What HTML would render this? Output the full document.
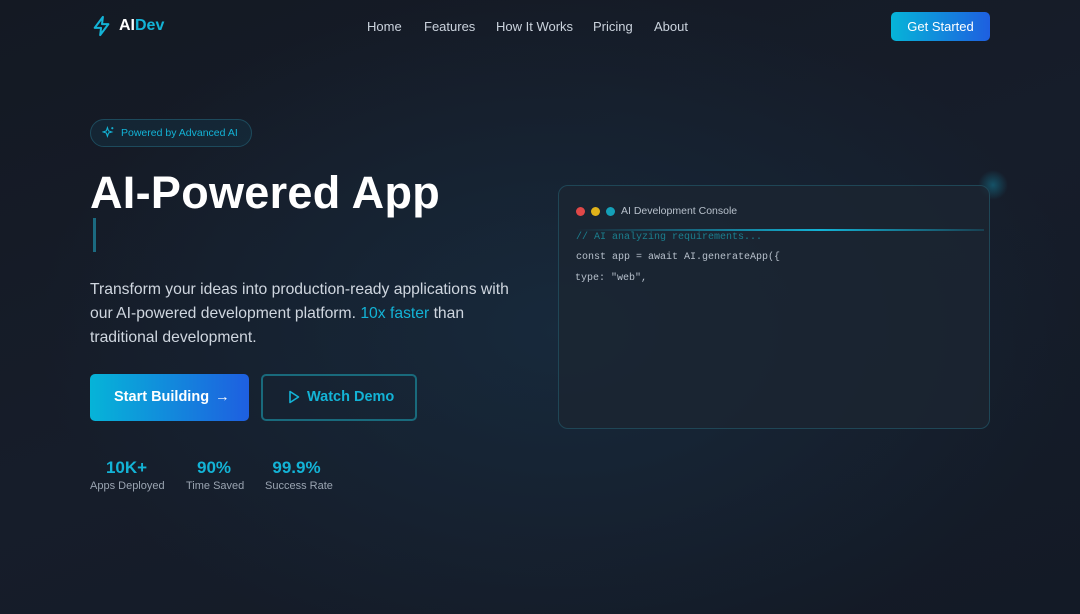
<!DOCTYPE html>
<html><head><meta charset="utf-8">
<style>
*{margin:0;padding:0;box-sizing:border-box}
html,body{width:1080px;height:614px;overflow:hidden}
body{font-family:"Liberation Sans",sans-serif;color:#fff;position:relative;
background:radial-gradient(ellipse 520px 340px at 560px 330px,#17293b 0%,rgba(23,35,52,0) 100%),linear-gradient(160deg,#141923 0%,#161d2a 50%,#131a26 100%);}
.abs{position:absolute;white-space:nowrap}
.nav a{position:absolute;top:19px;font-size:13px;color:#cbd3dd;text-decoration:none;white-space:nowrap}
.grad{background:linear-gradient(90deg,#06b4d8,#1e5fe0)}
.code{font-family:"Liberation Mono",monospace;font-size:10px;position:absolute;white-space:nowrap}
.st{position:absolute;top:458px;text-align:center;white-space:nowrap}
.st b{display:block;font-size:17px;color:#13b3d6}
.st span{display:block;font-size:11px;color:#9aa4b1;margin-top:2px}
</style></head><body>
<svg class="abs" style="left:91px;top:15px" width="22" height="22" viewBox="0 0 24 24" fill="none" stroke="#13b3d6" stroke-width="2.2" stroke-linejoin="round"><path d="M13 2L4 14h7l-1 8 9-12h-7l1-8z"/></svg>
<div class="abs" style="left:119px;top:17px;font-size:16px;font-weight:bold"><span style="color:#fff">AI</span><span style="color:#13b3d6">Dev</span></div>
<div class="nav">
<a style="left:367px">Home</a><a style="left:424px">Features</a><a style="left:496px">How It Works</a><a style="left:593px">Pricing</a><a style="left:654px">About</a>
</div>
<div class="abs grad" style="left:891px;top:12px;width:99px;height:29px;border-radius:5px;font-size:13px;color:#fff;text-align:center;line-height:29px">Get Started</div>

<div class="abs" style="left:90px;top:119px;width:162px;height:28px;border:1px solid #1d4a5c;border-radius:14px;background:rgba(20,60,80,.35)"></div>
<svg class="abs" style="left:102px;top:126px" width="13" height="13" viewBox="0 0 24 24" fill="none" stroke="#13b3d6" stroke-width="2"><path d="M10 3l2 6 6 2-6 2-2 6-2-6-6-2 6-2z"/><path d="M19 2v4M17 4h4"/></svg>
<div class="abs" style="left:121px;top:127px;font-size:10.5px;color:#13b3d6">Powered by Advanced AI</div>

<div class="abs" style="left:90px;top:167px;font-size:45px;font-weight:bold;letter-spacing:0.3px;color:#fff">AI-Powered App</div>
<div class="abs" style="left:93px;top:218px;width:3px;height:34px;background:#1b6a80"></div>

<div class="abs" style="left:90px;top:278px;font-size:15.7px;line-height:24px;color:#cfd6df">Transform your ideas into production-ready applications with<br>our AI-powered development platform. <span style="color:#13b3d6">10x faster</span> than<br>traditional development.</div>

<div class="abs grad" style="left:90px;top:374px;width:159px;height:47px;border-radius:5px;font-size:14.5px;font-weight:bold;line-height:47px;padding-left:24px">Start Building <span style="font-weight:normal;margin-left:2px">→</span></div>
<div class="abs" style="left:261px;top:374px;width:156px;height:47px;border-radius:5px;border:2px solid #196a7c;font-size:14.5px;font-weight:bold;line-height:43px;color:#13b3d6;padding-left:44px">Watch Demo</div>
<svg class="abs" style="left:288px;top:390px" width="12" height="14" viewBox="0 0 12 14" fill="none" stroke="#13b3d6" stroke-width="1.6" stroke-linejoin="round"><path d="M2 1.5l8.5 5.5-8.5 5.5z"/></svg>

<div class="st" style="left:90px;width:73px"><b>10K+</b><span>Apps Deployed</span></div>
<div class="st" style="left:186px;width:56px"><b>90%</b><span>Time Saved</span></div>
<div class="st" style="left:265px;width:63px"><b>99.9%</b><span>Success Rate</span></div>

<div class="abs" style="left:978px;top:170px;width:30px;height:30px;border-radius:50%;background:radial-gradient(circle,rgba(19,179,214,.35),rgba(19,179,214,0) 70%)"></div>
<div class="abs" style="left:558px;top:185px;width:432px;height:244px;border:1px solid #1f4656;border-radius:10px;background:rgba(28,38,50,.75)"></div>
<div class="abs" style="left:576px;top:207px;width:9px;height:9px;border-radius:50%;background:#e04848"></div>
<div class="abs" style="left:591px;top:207px;width:9px;height:9px;border-radius:50%;background:#e0b21a"></div>
<div class="abs" style="left:606px;top:207px;width:9px;height:9px;border-radius:50%;background:#14a0b8"></div>
<div class="abs" style="left:621px;top:205px;font-size:10.5px;color:#b7c0cb">AI Development Console</div>
<div class="abs" style="left:576px;top:229px;width:408px;height:2px;background:linear-gradient(90deg,rgba(19,179,214,0),#13b3d6 60%,rgba(19,179,214,.2))"></div>
<div class="code" style="left:576px;top:232px;color:#1b7f8f">// AI analyzing requirements...</div>
<div class="code" style="left:576px;top:252px;color:#b7c0cb">const app = await AI.generateApp({</div>
<div class="code" style="left:575px;top:273px;color:#b7c0cb">type: "web",</div>
</body></html>
